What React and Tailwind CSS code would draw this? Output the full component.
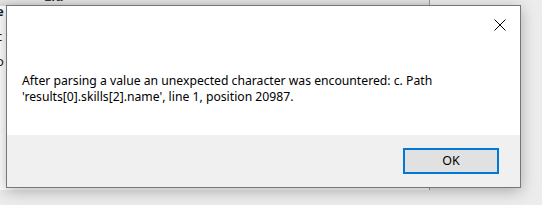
import React from "react";

export default function App() {
  return (
    <div
      className="relative h-[205px] w-[542px] overflow-hidden bg-[#ececec]"
      style={{ fontFamily: '"Noto Sans", "Open Sans", sans-serif' }}
    >
      {/* window behind the dialog */}
      <div className="absolute left-0 top-0 h-[190px] w-[430px] border-r border-[#9a9a9a] bg-white">
        <div className="h-[6px] bg-gradient-to-b from-[#e6e6e6] to-[#d6d6d6]" />
        <div className="absolute left-[-4px] top-[3px] flex flex-col gap-[9px] text-[13px] leading-[16px] text-[#1b1b1b]">
          <span className="font-bold">e</span>
          <span>c</span>
          <span>o</span>
        </div>
        <span className="absolute left-[44px] top-[-13px] text-[13px] font-bold text-[#333]">Lid</span>
      </div>

      {/* message box */}
      <div className="absolute left-[6px] top-[5px] flex h-[183px] w-[515px] flex-col border border-[#777777] bg-white shadow-[0_3px_14px_rgba(0,0,0,0.28)]">
        <div className="flex flex-1 flex-col">
          <div className="flex justify-end pr-[14px] pt-[13px]">
            <svg width="12" height="12" viewBox="0 0 12 12">
              <path d="M0.5 0.5 L11.5 11.5 M11.5 0.5 L0.5 11.5" stroke="#000" strokeWidth="1" fill="none" />
            </svg>
          </div>
          <p className="mt-[42px] pl-[15px] text-[12.2px] leading-[15.5px] text-black">
            After parsing a value an unexpected character was encountered: c. Path
            <br />
            'results[0].skills[2].name', line 1, position 20987.
          </p>
        </div>
        <div className="flex h-[52px] items-center justify-end bg-[#f0f0f0] pr-[21px]">
          <button className="flex h-[26px] w-[96px] items-center justify-center border-2 border-[#0078d7] bg-[#e1e1e1] text-[12.5px] text-black">
            OK
          </button>
        </div>
      </div>
    </div>
  );
}
